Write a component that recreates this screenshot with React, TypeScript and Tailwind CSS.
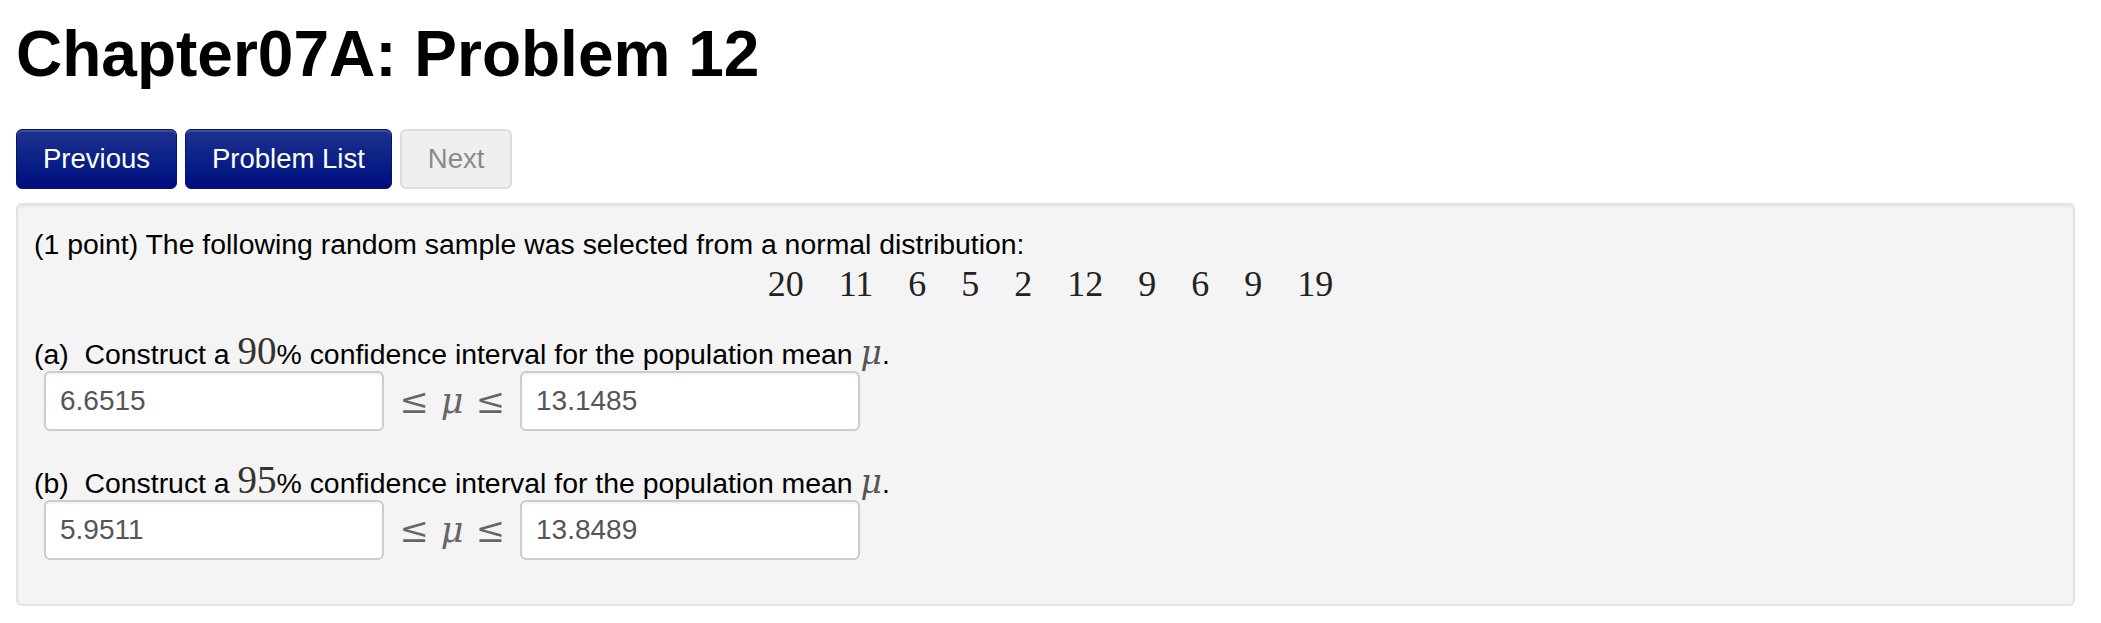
const sample = [20, 11, 6, 5, 2, 12, 9, 6, 9, 19];

function MathNum({ children }: { children: React.ReactNode }) {
  return (
    <span className="font-['Liberation_Serif','Times_New_Roman',serif] text-[39px] leading-none text-[#333]">
      {children}
    </span>
  );
}

function Mu() {
  return (
    <span className="font-['DejaVu_Serif',serif] italic text-[33px] leading-none text-[#555]">
      μ
    </span>
  );
}

function Interval({ label, level, low, high }: { label: string; level: string; low: string; high: string }) {
  return (
    <div>
      <p className="h-[40px] leading-[40px] whitespace-pre">
        {label}  Construct a <MathNum>{level}</MathNum>% confidence interval for the population mean <Mu />.
      </p>
      <div className="flex items-center">
        <input
          readOnly
          value={low}
          className="ml-[10px] w-[340px] h-[60px] px-[14px] bg-white border-2 border-[#cccccc] rounded-[6px] text-[28px] text-[#555] outline-none shadow-[inset_0_2px_2px_rgba(0,0,0,0.06)] font-['Liberation_Sans',Arial,sans-serif]"
        />
        <span className="w-[136px] flex items-center justify-center gap-[12px] font-['DejaVu_Serif',serif] text-[35px] leading-none text-[#666]">
          <span>≤</span>
          <span className="italic">μ</span>
          <span>≤</span>
        </span>
        <input
          readOnly
          value={high}
          className="w-[340px] h-[60px] px-[14px] bg-white border-2 border-[#cccccc] rounded-[6px] text-[28px] text-[#555] outline-none shadow-[inset_0_2px_2px_rgba(0,0,0,0.06)] font-['Liberation_Sans',Arial,sans-serif]"
        />
      </div>
    </div>
  );
}

export default function App() {
  return (
    <div className="min-h-screen bg-white pl-4 pr-[26px] pt-[22px] text-black font-['Liberation_Sans',Arial,sans-serif]">
      <h1 className="text-[64px] leading-none font-bold">Chapter07A: Problem 12</h1>

      {/* Navigation */}
      <div className="mt-[43px] flex gap-[8px]">
        <button className="h-[60px] px-[26px] rounded-[6px] border border-[#06126e] bg-gradient-to-b from-[#1d318f] to-[#000a7e] text-white text-[27.5px] shadow-[inset_0_2px_0_rgba(255,255,255,0.15)]">
          Previous
        </button>
        <button className="h-[60px] px-[26px] rounded-[6px] border border-[#06126e] bg-gradient-to-b from-[#1d318f] to-[#000a7e] text-white text-[27.5px] shadow-[inset_0_2px_0_rgba(255,255,255,0.15)]">
          Problem List
        </button>
        <button className="h-[60px] px-[26px] rounded-[6px] border-2 border-[#dddddd] bg-[#efefef] text-[#8a8a8a] text-[27.5px]">
          Next
        </button>
      </div>

      {/* Problem body */}
      <div className="mt-[14px] border-2 border-[#e2e2e2] rounded-[6px] bg-[#f4f4f4] pl-[16px] pr-[16px] pt-[19px] pb-[44px] text-[28.4px] leading-[40px] shadow-[inset_0_2px_2px_rgba(0,0,0,0.05)]">
        <p>(1 point) The following random sample was selected from a normal distribution:</p>
        <div className="flex justify-center gap-[35px] pl-[10px] h-[40px] items-end font-['Liberation_Serif','Times_New_Roman',serif] text-[36px] leading-[40px] text-[#222]">
          {sample.map((n, i) => (
            <span key={i}>{n}</span>
          ))}
        </div>
        <div className="mt-[27px]">
          <Interval label="(a)" level="90" low="6.6515" high="13.1485" />
        </div>
        <div className="mt-[29px]">
          <Interval label="(b)" level="95" low="5.9511" high="13.8489" />
        </div>
      </div>
    </div>
  );
}
